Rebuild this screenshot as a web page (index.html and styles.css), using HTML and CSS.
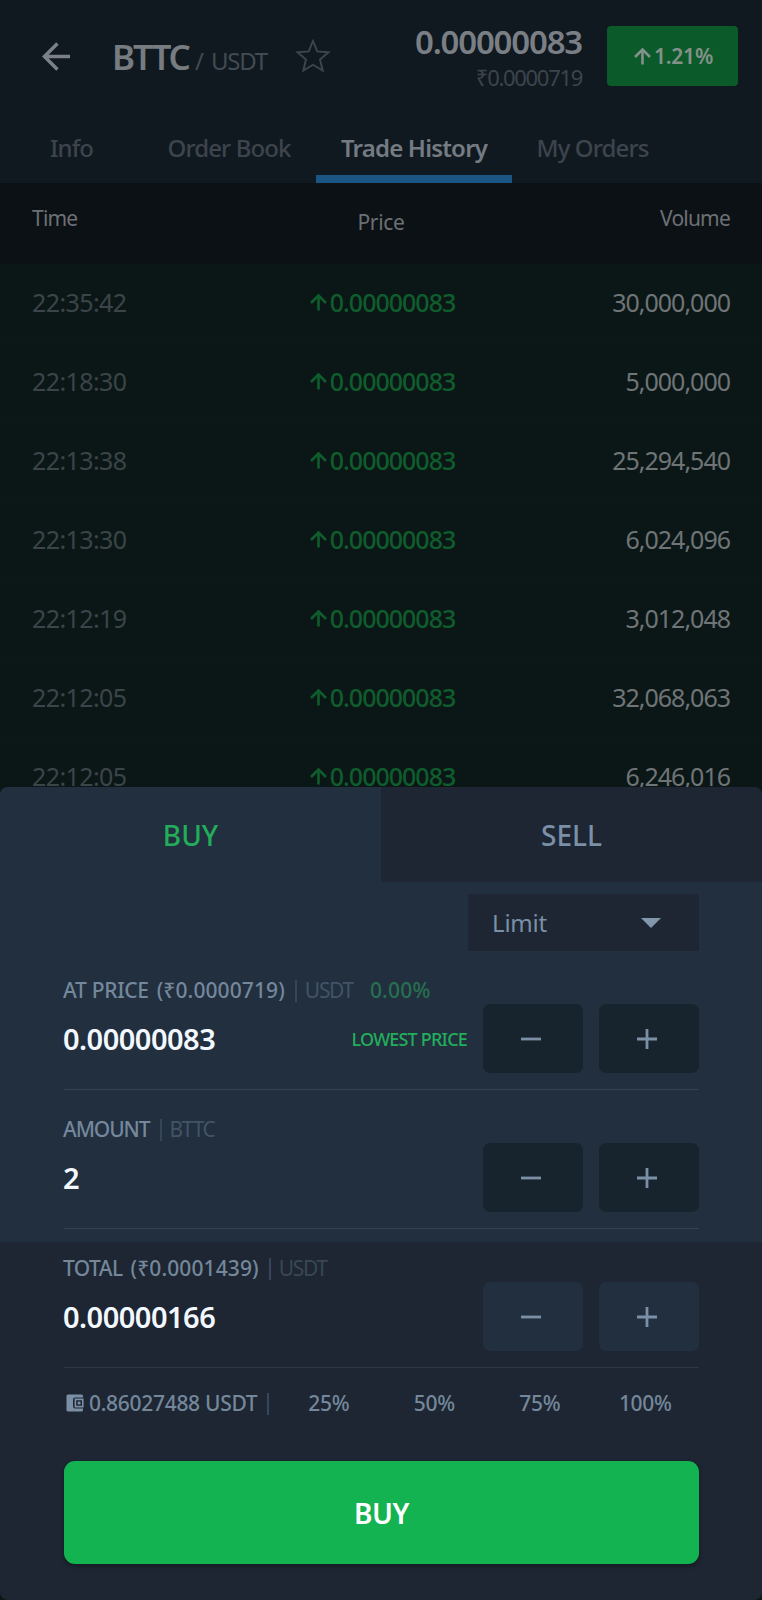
FILE: index.html
```html
<!DOCTYPE html>
<html lang="en">
<head>
    <meta charset="UTF-8">
    <meta name="viewport" content="width=device-width, initial-scale=1.0">
    <title>BTTC / USDT</title>
    <link rel="stylesheet" href="styles.css">
</head>
<body>
    <div class="screen">
        <header class="header">
            <div class="top-bar">
                <svg class="back" viewBox="0 0 30 30"><path d="M29 15H2M16 1.500L2.500 15l13.500 13.500"/></svg>
                <h1 class="coin">BTTC</h1>
                <span class="slash">/</span>
                <span class="quote">USDT</span>
                <svg class="star" viewBox="0 0 36 36"><path d="M18 3l4.300 10.400 11.200.900-8.500 7.300 2.700 11L18 26.800l-9.700 5.800 2.700-11-8.500-7.300 11.200-.900z"/></svg>
                <div class="last-price">
                    <span class="price">0.00000083</span>
                    <span class="inr">₹0.0000719</span>
                </div>
                <div class="change">
                    <svg class="arrow" viewBox="0 0 17 17"><path d="M8.500 16.500V2M1 9l7.500-7.500L16 9"/></svg>
                    <span>1.21%</span>
                </div>
            </div>
            <nav class="tabs">
                <a class="tab tab-info">Info</a>
                <a class="tab tab-book">Order Book</a>
                <a class="tab tab-history active">Trade History</a>
                <a class="tab tab-orders">My Orders</a>
            </nav>
        </header>

        <div class="history">
            <div class="history-head">
                <span>Time</span>
                <span class="head-price">Price</span>
                <span class="head-volume">Volume</span>
            </div>
            <div class="trade">
                <span class="time">22:35:42</span>
                <span class="rate"><svg class="arrow" viewBox="0 0 17 17"><path d="M8.500 16.500V2M1 9l7.500-7.500L16 9"/></svg>0.00000083</span>
                <span class="volume">30,000,000</span>
            </div>
            <div class="trade">
                <span class="time">22:18:30</span>
                <span class="rate"><svg class="arrow" viewBox="0 0 17 17"><path d="M8.500 16.500V2M1 9l7.500-7.500L16 9"/></svg>0.00000083</span>
                <span class="volume">5,000,000</span>
            </div>
            <div class="trade">
                <span class="time">22:13:38</span>
                <span class="rate"><svg class="arrow" viewBox="0 0 17 17"><path d="M8.500 16.500V2M1 9l7.500-7.500L16 9"/></svg>0.00000083</span>
                <span class="volume">25,294,540</span>
            </div>
            <div class="trade">
                <span class="time">22:13:30</span>
                <span class="rate"><svg class="arrow" viewBox="0 0 17 17"><path d="M8.500 16.500V2M1 9l7.500-7.500L16 9"/></svg>0.00000083</span>
                <span class="volume">6,024,096</span>
            </div>
            <div class="trade">
                <span class="time">22:12:19</span>
                <span class="rate"><svg class="arrow" viewBox="0 0 17 17"><path d="M8.500 16.500V2M1 9l7.500-7.500L16 9"/></svg>0.00000083</span>
                <span class="volume">3,012,048</span>
            </div>
            <div class="trade">
                <span class="time">22:12:05</span>
                <span class="rate"><svg class="arrow" viewBox="0 0 17 17"><path d="M8.500 16.500V2M1 9l7.500-7.500L16 9"/></svg>0.00000083</span>
                <span class="volume">32,068,063</span>
            </div>
            <div class="trade">
                <span class="time">22:12:05</span>
                <span class="rate"><svg class="arrow" viewBox="0 0 17 17"><path d="M8.500 16.500V2M1 9l7.500-7.500L16 9"/></svg>0.00000083</span>
                <span class="volume">6,246,016</span>
            </div>
        </div>

        <!-- Order sheet -->
        <div class="sheet">
            <div class="side-tabs">
                <div class="side buy">BUY</div>
                <div class="side sell">SELL</div>
            </div>

            <div class="order-form">
                <div class="order-type">
                    <span class="type-name">Limit</span>
                    <svg class="caret" viewBox="0 0 20 10"><path d="M0 0h20L10 10z"/></svg>
                </div>

                <div class="field">
                    <div class="label">
                        <span class="name name-price">AT PRICE</span>
                        <span class="approx">(₹0.0000719)</span>
                        <span class="bar"></span>
                        <span class="unit">USDT</span>
                        <span class="diff">0.00%</span>
                    </div>
                    <div class="row">
                        <span class="value">0.00000083</span>
                        <span class="lowest">LOWEST PRICE</span>
                        <button class="step"><svg viewBox="0 0 20 20"><path d="M0 10h20"/></svg></button>
                        <button class="step"><svg viewBox="0 0 20 20"><path d="M0 10h20M10 0v20"/></svg></button>
                    </div>
                </div>

                <div class="field">
                    <div class="label">
                        <span class="name name-amount">AMOUNT</span>
                        <span class="bar"></span>
                        <span class="unit">BTTC</span>
                    </div>
                    <div class="row">
                        <span class="value">2</span>
                        <button class="step"><svg viewBox="0 0 20 20"><path d="M0 10h20"/></svg></button>
                        <button class="step"><svg viewBox="0 0 20 20"><path d="M0 10h20M10 0v20"/></svg></button>
                    </div>
                </div>
            </div>

            <div class="total">
                <div class="field">
                    <div class="label">
                        <span class="name name-total">TOTAL</span>
                        <span class="approx">(₹0.0001439)</span>
                        <span class="bar"></span>
                        <span class="unit">USDT</span>
                    </div>
                    <div class="row">
                        <span class="value">0.00000166</span>
                        <button class="step"><svg viewBox="0 0 20 20"><path d="M0 10h20"/></svg></button>
                        <button class="step"><svg viewBox="0 0 20 20"><path d="M0 10h20M10 0v20"/></svg></button>
                    </div>
                </div>

                <div class="balance">
                    <svg class="wallet" viewBox="0 0 18 18">
                        <path class="wallet-body" d="M2 0.500h13.500a1.500 1.500 0 0 1 1.500 1.500v1.500H9a2 2 0 0 0-2 2v7a2 2 0 0 0 2 2h8V16a1.500 1.500 0 0 1-1.500 1.500H2A1.500 1.500 0 0 1 .500 16V2A1.500 1.500 0 0 1 2 .500z"/>
                        <path class="wallet-pocket" d="M9.400 5.400h7.400v7.200H9.400z"/>
                        <path class="wallet-body" d="M11.700 7.600h2.800v2.800h-2.800z"/>
                    </svg>
                    <span class="funds">0.86027488 USDT</span>
                    <span class="bar"></span>
                    <div class="percents">
                        <span>25%</span>
                        <span>50%</span>
                        <span>75%</span>
                        <span>100%</span>
                    </div>
                </div>

                <button class="btn-buy">BUY</button>
            </div>
        </div>
    </div>
</body>
</html>
```
FILE: styles.css
```css
* {
    box-sizing: border-box;
}

body {
    margin: 0;
    background-color: #0b1717;
    font-family: "Noto Sans", sans-serif;
}

button {
    font-family: inherit;
    border: none;
    padding: 0;
}

svg {
    display: block;
    fill: none;
    flex-shrink: 0;
}

.screen {
    position: relative;
    width: 762px;
    height: 1600px;
    overflow: hidden;
}

/* Header */
.header {
    height: 183px;
    background-color: #111920;
}

.top-bar {
    display: flex;
    align-items: center;
    height: 112px;
    padding: 0 24px 0 42px;
}

.back {
    width: 29px;
    height: 29px;
    stroke: #7b8187;
    stroke-width: 3.6;
}

.coin {
    margin: 0 0 0 41px;
    padding-top: 1px;
    width: 83px;
    font-size: 35px;
    font-weight: 600;
    line-height: 44px;
    letter-spacing: -2.1px;
    color: #777c81;
}

.slash,
.quote {
    padding-top: 10px;
    font-size: 24px;
    line-height: 32px;
    color: #424a53;
}

.quote {
    margin-left: 7px;
    width: 56px;
    letter-spacing: -1.2px;
}

.star {
    width: 36px;
    height: 36px;
    margin-left: 28px;
    stroke: #3e454e;
    stroke-width: 1.9;
}

.last-price {
    display: flex;
    flex-direction: column;
    align-items: flex-end;
    margin: 3px 25px 0 auto;
}

.price {
    font-size: 33px;
    font-weight: 600;
    line-height: 40px;
    letter-spacing: -1.2px;
    color: #7a7f85;
}

.inr {
    font-size: 22px;
    font-weight: 400;
    line-height: 31px;
    letter-spacing: -1.3px;
    color: #3d444c;
}

.change {
    display: flex;
    align-items: center;
    justify-content: center;
    gap: 3px;
    width: 131px;
    height: 60px;
    padding-left: 2px;
    border-radius: 4px;
    background-color: #0b5a29;
    color: #84918a;
    font-size: 21px;
    font-weight: 600;
    letter-spacing: -0.2px;
}

.arrow {
    width: 17px;
    height: 17px;
    stroke: currentColor;
    stroke-width: 2.6;
}

.tabs {
    display: flex;
    height: 71px;
}

.tab {
    padding: 20px 0 0;
    font-size: 24px;
    font-weight: 500;
    line-height: 32px;
    letter-spacing: -0.9px;
    white-space: nowrap;
    text-align: center;
    color: #3d444d;
    border-bottom: 8px solid transparent;
}

.tab-info {
    width: 143px;
}

.tab-book {
    width: 172px;
}

.tab-history {
    width: 196px;
    margin-left: 1px;
}

.tab-orders {
    width: 161px;
}

.tab.active {
    font-weight: 600;
    letter-spacing: -0.8px;
    color: #757b82;
    border-bottom-color: #1a5583;
}

/* Trade history */
.history-head,
.trade {
    display: grid;
    grid-template-columns: 1fr 1fr 1fr;
    padding: 0 32px;
}

.history-head {
    height: 81px;
    padding-top: 20px;
    background-color: #0c1115;
    font-size: 21px;
    line-height: 30px;
    letter-spacing: -0.8px;
    color: #6c7074;
}

.head-price {
    padding-top: 4px;
    text-align: center;
    letter-spacing: -0.3px;
}

.head-volume {
    text-align: right;
}

.trade {
    align-items: center;
    height: 79px;
    padding-bottom: 2px;
    border-bottom: 1px solid #0c191b;
    background-color: #0b1717;
    font-size: 25px;
    letter-spacing: -1px;
}

.time {
    letter-spacing: -0.6px;
    color: #3b4448;
}

.rate {
    display: flex;
    align-items: center;
    justify-content: center;
    gap: 3px;
    padding-left: 3px;
    color: #0f5d2c;
    font-weight: 500;
}

.volume {
    text-align: right;
    color: #6f7476;
}

/* Order sheet */
.sheet {
    position: absolute;
    left: 0;
    right: 0;
    bottom: 0;
    border-radius: 8px;
    overflow: hidden;
    background-color: #1d2632;
}

.side-tabs {
    display: flex;
    height: 95px;
}

.side {
    flex: 1;
    font-size: 28px;
    font-weight: 500;
    line-height: 97px;
    text-align: center;
}

.buy {
    background-color: #212f3f;
    color: #23ad5b;
}

.sell {
    background-color: #1d2632;
    color: #7b8fa6;
}

.order-form {
    padding: 12px 63px 13px 64px;
    background-color: #212f3f;
}

.order-type {
    display: flex;
    align-items: center;
    justify-content: space-between;
    width: 231px;
    height: 57px;
    margin-left: auto;
    padding: 0 38px 0 24px;
    background-color: #1d2632;
    font-size: 24px;
    color: #7b8fa6;
}

.type-name {
    letter-spacing: -0.2px;
}

.caret {
    width: 20px;
    height: 10px;
    fill: #8296ac;
}

.field {
    padding: 26px 0 16px;
    border-bottom: 1px solid #344250;
}

.label {
    display: flex;
    align-items: center;
    height: 27px;
    margin-left: -1px;
    padding-bottom: 2px;
    font-size: 21px;
    color: #74879b;
    white-space: nowrap;
}

.name,
.approx {
    font-weight: 500;
}

.name-price {
    letter-spacing: -0.3px;
}

.name-amount {
    letter-spacing: -1.1px;
}

.name-total {
    letter-spacing: -0.6px;
}

.approx {
    margin-left: 8px;
    letter-spacing: 0.1px;
}

.bar {
    width: 2px;
    height: 22px;
    margin: 2px 8px 0 10px;
    background-color: #36465a;
}

.unit {
    font-weight: 400;
    letter-spacing: -1.3px;
    color: #435366;
}

.diff {
    margin-left: 17px;
    font-weight: 500;
    letter-spacing: 0.2px;
    color: #27704f;
}

.row {
    display: flex;
    align-items: center;
    height: 69px;
}

.value {
    flex: 1;
    margin-left: -1px;
    font-size: 29px;
    font-weight: 600;
    letter-spacing: -0.5px;
    color: #f3f8ff;
}

.lowest {
    padding-top: 1px;
    font-size: 18px;
    font-weight: 500;
    letter-spacing: -0.8px;
    color: #23ad5b;
}

.step {
    display: flex;
    align-items: center;
    justify-content: center;
    width: 100px;
    height: 69px;
    margin-left: 16px;
    padding-right: 5px;
    border-radius: 7px;
    background-color: #18242d;
}

.step svg {
    width: 20px;
    height: 20px;
    stroke: #7b8fa6;
    stroke-width: 2.8;
}

/* Total and confirm */
.total {
    padding: 0 63px 36px 64px;
}

.total .field {
    padding-top: 13px;
    border-bottom-color: #2f3842;
}

.total .step {
    background-color: #212f3f;
}

.total .unit {
    color: #3a4653;
}

.balance {
    display: flex;
    align-items: center;
    height: 70px;
    font-size: 21px;
    font-weight: 500;
    letter-spacing: -0.3px;
    color: #74879b;
}

.wallet {
    width: 18px;
    height: 18px;
    margin: 0 5px 0 2px;
}

.wallet-body {
    fill: #7b8fa6;
}

.wallet-pocket {
    stroke: #7b8fa6;
    stroke-width: 1.6;
}

.percents {
    display: grid;
    grid-template-columns: repeat(4, 1fr);
    flex: 0 0 422px;
    margin: 0 1px 0 auto;
    text-align: center;
}

.balance .bar {
    margin-right: 0;
    margin-left: 10px;
}

.btn-buy {
    display: block;
    width: 100%;
    height: 103px;
    margin-top: 23px;
    border-radius: 11px;
    background-color: #14b351;
    box-shadow: 0 2px 4px rgba(0, 0, 0, 0.35);
    color: #fff;
    font-size: 28px;
    font-weight: 600;
    letter-spacing: -0.4px;
}
```
